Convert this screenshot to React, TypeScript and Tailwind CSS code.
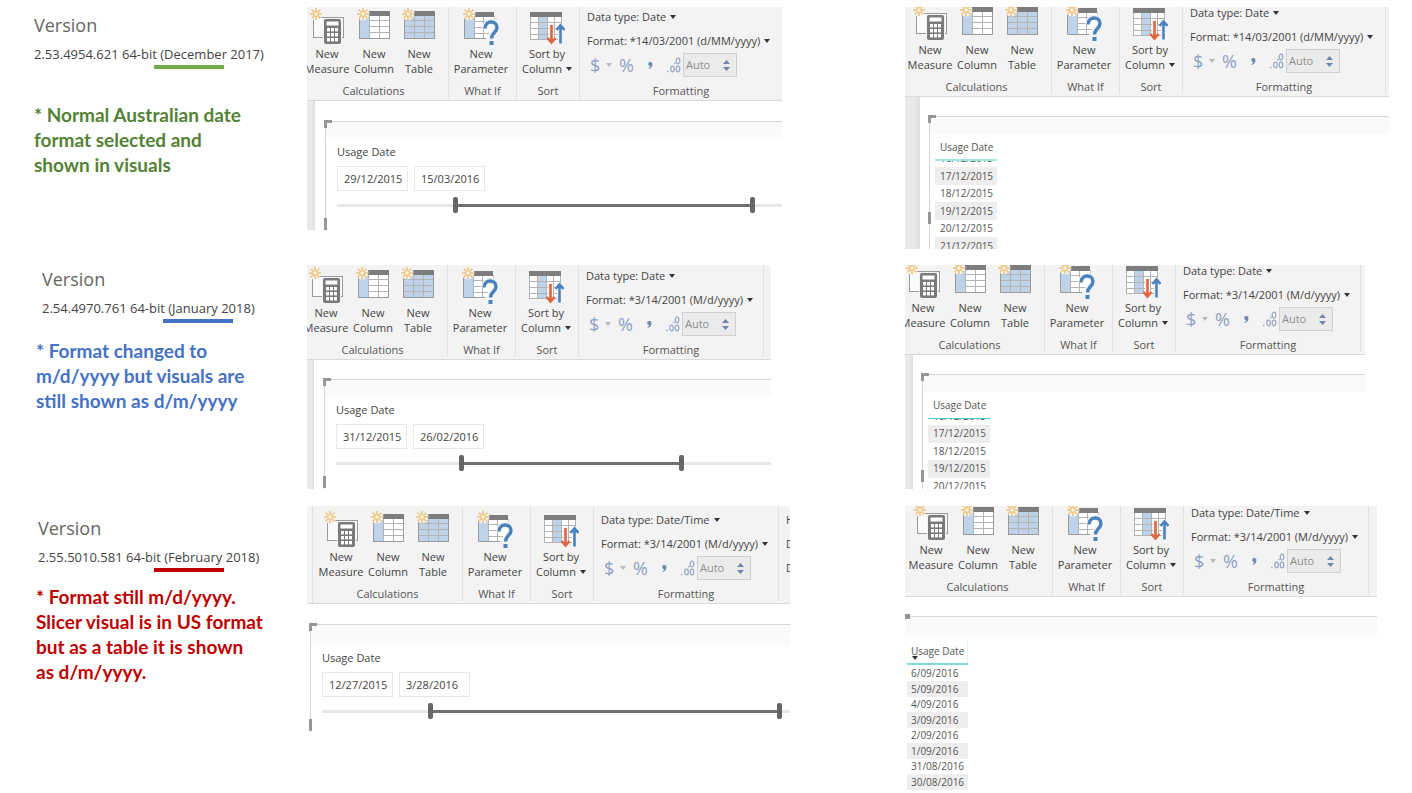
import { useState } from "react";
import type { ReactNode } from "react";
import clsx from "clsx";

interface SlicerData {
  from: string;
  to: string;
  low: number;
  high: number;
}

/* ---------- Icons ---------- */

function Star({ x, y = 6 }: { x: number; y?: number }) {
  return (
    <g transform={`translate(${x} ${y})`}>
      <circle r="6.4" fill="#f3f3f3" />
      <path
        d="M0-6V-3M0 3V6M-6 0H-3M3 0H6M-4.3-4.3L-2.2-2.2M2.2 2.2L4.3 4.3M-4.3 4.3L-2.2 2.2M2.2-2.2L4.3-4.3"
        stroke="#eec37c"
        strokeWidth="1.6"
      />
      <circle r="2.4" fill="#fdf6e8" stroke="#eec37c" strokeWidth="1.2" />
    </g>
  );
}

function MeasureIcon() {
  return (
    <svg width="36" height="38" viewBox="0 0 36 38" fill="none" aria-hidden="true">
      <rect x="4.5" y="9.5" width="30" height="20" fill="#fafafa" stroke="#9a9a9a" />
      <rect x="14" y="10" width="19" height="27" fill="#f3f3f3" />
      <rect x="15" y="11" width="17" height="25" rx="2" fill="#7a7a7a" />
      <rect x="17.5" y="13.5" width="12" height="4" fill="#fff" />
      {[20, 25, 30].map((y) =>
        [18, 22, 26].map((x) => <rect key={`${x}-${y}`} x={x} y={y} width="3" height="3.4" fill="#fff" />)
      )}
      <Star x={7} />
    </svg>
  );
}

function GridIcon({ full = false }: { full?: boolean }) {
  return (
    <svg width="36" height="38" viewBox="0 0 36 38" fill="none" aria-hidden="true">
      <rect x="3.5" y="3.5" width="30" height="27" fill="#fff" stroke="#9a9a9a" />
      <rect x="4" y="4" width={full ? 29 : 9} height="26" fill="#bfd3e8" />
      <path
        d={full ? "M4 12.5H33M4 18.5H33M4 24.5H33M13.5 8V30M23.5 8V30" : "M13 12.5H33M13 18.5H33M13 24.5H33M13.5 8V30M23.5 8V30"}
        stroke="#b3b3b3"
      />
      <rect x="3" y="3" width="31" height="5" fill="#7d7d7d" />
      <Star x={7} />
    </svg>
  );
}

function ParameterIcon() {
  return (
    <svg width="36" height="38" viewBox="0 0 36 38" fill="none" aria-hidden="true">
      <path d="M1.5 4V30.5H23M31 8V12" stroke="#9a9a9a" />
      <rect x="11" y="8" width="20" height="22" fill="#fff" />
      <rect x="2" y="8" width="9" height="22" fill="#bfd3e8" />
      <path d="M11 13.5H30M11 19.5H24M11 25.5H26M11.5 8V30M20.5 8V30" stroke="#b3b3b3" />
      <rect x="1" y="4" width="30" height="5" fill="#7d7d7d" />
      <path d="M22 20.5C22 11.5 34 12 34 19.5C34 24.5 28.5 24 28.5 30.5" stroke="#f3f3f3" strokeWidth="6" />
      <path d="M22 20.5C22 12 34 12 34 19.5C34 24.5 28.5 24.5 28.5 30.5" stroke="#4a82bd" strokeWidth="3.4" />
      <rect x="26.5" y="33" width="4" height="4" fill="#4a82bd" />
      <Star x={6} />
    </svg>
  );
}

function SortIcon() {
  return (
    <svg width="36" height="38" viewBox="0 0 36 38" fill="none" aria-hidden="true">
      <rect x="1.5" y="5.5" width="31" height="26" fill="#fff" stroke="#b3b3b3" />
      <rect x="10" y="9" width="8" height="22" fill="#bfd3e8" />
      <path d="M2 14.5H32M2 20.5H32M2 26.5H32M9.5 9V31M18.5 9V31M25.5 9V31" stroke="#b3b3b3" />
      <rect x="1" y="4" width="32" height="5" fill="#7d7d7d" />
      <path d="M22.5 16V36M31.5 16V36" stroke="#f3f3f3" strokeWidth="5" />
      <path d="M22.5 17V34M18.5 30L22.5 34.5L26.5 30" stroke="#dd6542" strokeWidth="2.6" />
      <path d="M31.5 35.5V18M27.5 22L31.5 17.5L35.5 22" stroke="#4a82bd" strokeWidth="2.6" />
    </svg>
  );
}

function Caret({ className = "text-[#333333]" }: { className?: string }) {
  return (
    <svg width="6" height="4" viewBox="0 0 6 4" className={clsx("shrink-0", className)} aria-hidden="true">
      <path d="M0 0H6L3 4Z" fill="currentColor" />
    </svg>
  );
}

function DecimalsIcon() {
  return (
    <svg width="15" height="16" viewBox="0 0 15 16" fill="none" stroke="#9dabc8" strokeWidth="1.3" aria-hidden="true">
      <ellipse cx="12" cy="4" rx="1.8" ry="2.8" />
      <ellipse cx="6.5" cy="12" rx="1.8" ry="2.8" />
      <ellipse cx="12" cy="12" rx="1.8" ry="2.8" />
      <path d="M8 6.5H9.5M1 14.5H2.5" />
    </svg>
  );
}

/* ---------- Ribbon ---------- */

function RibbonGroup({ label, className, children }: { label: string; className: string; children: ReactNode }) {
  return (
    <div className={clsx("flex h-[95px] shrink-0 flex-col border-r border-[#e1e1e1]", className)}>
      <div className="h-20">{children}</div>
      <div className="text-center leading-[15px] text-[#555555]">{label}</div>
    </div>
  );
}

function RibbonButton({ icon, lines, caret, className }: { icon: ReactNode; lines: [string, string]; caret?: boolean; className: string }) {
  return (
    <button type="button" className={clsx("flex shrink-0 flex-col items-center pt-[5px] leading-[15px] whitespace-nowrap", className)}>
      {icon}
      <span>{lines[0]}</span>
      <span className="flex items-center gap-1">
        {lines[1]}
        {caret && <Caret />}
      </span>
    </button>
  );
}

interface RibbonProps {
  dataType: string;
  format: string;
  /** margins that scroll the ribbon inside its cropped frame */
  shift: string;
  wide?: boolean;
  extra?: string[];
}

function Ribbon({ dataType, format, shift, wide, extra }: RibbonProps) {
  return (
    <div className="overflow-hidden border-b border-[#d9d9d9] bg-[#f3f3f3] text-[11px] text-[#444444]">
      <div className={clsx("flex h-[97px] border-l border-[#e1e1e1]", shift)}>
        <RibbonGroup label="Calculations" className="w-[150px]">
          <div className="flex pl-[3px]">
            <RibbonButton icon={<MeasureIcon />} lines={["New", "Measure"]} className="w-[50px]" />
            <RibbonButton icon={<GridIcon />} lines={["New", "Column"]} className="w-11" />
            <RibbonButton icon={<GridIcon full />} lines={["New", "Table"]} className="w-[46px]" />
          </div>
        </RibbonGroup>
        <RibbonGroup label="What If" className="w-[68px]">
          <RibbonButton icon={<ParameterIcon />} lines={["New", "Parameter"]} className="w-16" />
        </RibbonGroup>
        <RibbonGroup label="Sort" className="w-[63px]">
          <RibbonButton icon={<SortIcon />} lines={["Sort by", "Column"]} caret className="w-[60px]" />
        </RibbonGroup>
        <RibbonGroup label="Formatting" className={wide ? "w-[203px]" : "w-[185px]"}>
          <div className="flex flex-col pt-0.5 pl-[7px] whitespace-nowrap">
            <button type="button" className="flex h-6 items-center gap-1">
              Data type: {dataType} <Caret />
            </button>
            <button type="button" className="flex h-6 items-center gap-1">
              Format: {format} <Caret />
            </button>
            <div className="flex h-6 items-center text-[#8fa1c4]">
              <button type="button" aria-label="Currency" className="flex w-8 items-center gap-1.5 pl-[3px] text-[18px] leading-6 font-medium">
                $ <Caret className="text-[#b9b9b9]" />
              </button>
              <button type="button" aria-label="Percentage" className="w-[29px] text-left text-[18px] leading-6 font-medium">
                %
              </button>
              <button type="button" aria-label="Thousands separator" className="w-[18px]">
                <svg width="5" height="7" viewBox="0 0 5 7" aria-hidden="true">
                  <path d="M2.5 0A2 2 0 0 1 4.5 2C4.5 4.5 3 6.5 1 7L.5 6.2C1.5 5.7 2 5 2 4A2 2 0 0 1 2.5 0Z" fill="#7389b5" />
                </svg>
              </button>
              <DecimalsIcon />
              <div className="ml-0.5 flex h-6 w-[54px] items-center justify-between border border-[#cfcfcf] bg-[#ebebeb] pr-1.5 pl-0.5">
                <input aria-label="Decimal places" defaultValue="Auto" className="w-8 bg-transparent text-[#8d8d8d] outline-none" />
                <svg width="7" height="11" viewBox="0 0 7 11" fill="#6f86ad" aria-hidden="true">
                  <path d="M0 4L3.5 0L7 4ZM0 7L3.5 11L7 7Z" />
                </svg>
              </div>
            </div>
          </div>
        </RibbonGroup>
        {extra && (
          <div className="flex shrink-0 flex-col pt-0.5 pl-[7px]">
            {extra.map((text, i) => (
              <span key={i} className="h-6 leading-6">
                {text}
              </span>
            ))}
          </div>
        )}
      </div>
    </div>
  );
}

/* ---------- Report visuals ---------- */

const thumb =
  "pointer-events-none absolute inset-0 h-4 w-full appearance-none bg-transparent [&::-webkit-slider-thumb]:pointer-events-auto [&::-webkit-slider-thumb]:h-4 [&::-webkit-slider-thumb]:w-[5px] [&::-webkit-slider-thumb]:appearance-none [&::-webkit-slider-thumb]:rounded-xs [&::-webkit-slider-thumb]:bg-[#666666]";

function Slicer({ from, to, low, high }: SlicerData) {
  const [range, setRange] = useState([low, high]);

  return (
    <div>
      <h3 className="text-[11px] leading-4 text-[#444444]">Usage Date</h3>
      <div className="mt-1.5 flex gap-1.5">
        {[from, to].map((date, i) => (
          <input
            key={date}
            aria-label={i === 0 ? "Start date" : "End date"}
            defaultValue={date}
            className="h-[25px] w-[71px] border border-[#e8e8e8] bg-white pl-1.5 text-[11px] text-[#444444] outline-none"
          />
        ))}
      </div>
      <div className="relative mt-1.5 h-4">
        <div className="absolute inset-x-0 top-[7px] h-[3px] bg-[#e8e8e8]" />
        <div
          className="absolute top-[7px] h-[3px] bg-[#707070]"
          style={{ left: `${range[0] / 10}%`, right: `${100 - range[1] / 10}%` }}
        />
        {range.map((value, i) => (
          <input
            key={i}
            type="range"
            min={0}
            max={1000}
            value={value}
            aria-label={i === 0 ? "Range start" : "Range end"}
            onChange={(e) => setRange(range.map((v, j) => (j === i ? Number(e.target.value) : v)))}
            className={thumb}
          />
        ))}
      </div>
    </div>
  );
}

function ScrolledTable({ hidden, dates, line }: { hidden: string; dates: string[]; line: string }) {
  return (
    <table className="w-[62px] text-[10px] text-[#555555]">
      <thead>
        <tr className={clsx("border-b", line)}>
          <th className="h-[22px] p-0 pb-1 pl-[5px] text-left leading-4 font-normal whitespace-nowrap">Usage Date</th>
        </tr>
      </thead>
      <tbody>
        <tr>
          <td className="p-0">
            <div className="flex h-[6px] items-end overflow-hidden pl-[5px] leading-[17px]">{hidden}</div>
          </td>
        </tr>
        {dates.map((date, i) => (
          <tr key={date} className={i % 2 === 0 ? "h-[18px] bg-[#eeeeee]" : "h-[17px]"}>
            <td className="p-0 pl-[5px] leading-[17px]">{date}</td>
          </tr>
        ))}
      </tbody>
    </table>
  );
}

function SortedTable({ dates }: { dates: string[] }) {
  return (
    <table className="w-[61px] text-[10px] text-[#555555]">
      <thead>
        <tr className="border-b-2 border-[#7fdcd4]">
          <th className="relative h-[25px] border-r border-[#e3f5f4] p-0 pl-1 text-left leading-4 font-normal whitespace-nowrap">
            Usage Date
            <Caret className="absolute bottom-[3px] left-[5px] text-[#333333]" />
          </th>
        </tr>
      </thead>
      <tbody>
        <tr className="h-0.5" />
        {dates.map((date, i) => (
          <tr key={date} className={i % 2 === 1 ? "h-4 bg-[#eeeeee]" : "h-[15px]"}>
            <td className="p-0 pl-1 leading-[15px]">{date}</td>
          </tr>
        ))}
      </tbody>
    </table>
  );
}

interface CanvasProps {
  height: string;
  /** width of the grey strip on the left */
  gutter?: string;
  frame: string;
  band?: string;
  body: string;
  handle?: string;
  children: ReactNode;
}

function Canvas({ height, gutter, frame, band = "h-[17px]", body, handle, children }: CanvasProps) {
  return (
    <div className={clsx("flex overflow-hidden bg-white", height)}>
      {gutter && <div className={clsx("shrink-0 bg-linear-to-r from-[#e9e9e9] from-60% to-[#dedede]", gutter)} />}
      <div className={clsx("relative grow border-t border-[#d6d6d6]", frame)}>
        {handle ? (
          <>
            <span className="absolute -top-0.5 -left-0.5 size-2 border-t-[3px] border-l-[3px] border-[#969696]" />
            <span className={clsx("absolute -left-0.5 h-3 w-[3px] bg-[#969696]", handle)} />
          </>
        ) : (
          <span className="absolute -top-[3px] left-0 h-[5px] w-[5px] bg-[#969696]" />
        )}
        <div className={clsx("bg-[#fafafa]", band)} />
        <div className={body}>{children}</div>
      </div>
    </div>
  );
}

/* ---------- Version notes ---------- */

interface VersionProps {
  version: string;
  indent: string;
  underline: string;
  noteClass: string;
  note: string[];
}

function VersionNote({ version, indent, underline, noteClass, note }: VersionProps) {
  return (
    <div>
      <div className={indent}>
        <h2 className="text-[18px] leading-6 text-[#666666]">Version</h2>
        <div className="relative mt-[7px] w-fit">
          <p className="text-[13px] leading-5 whitespace-nowrap text-[#444444]">{version}</p>
          <span className={clsx("absolute top-[21px] h-1 w-[70px]", underline)} />
        </div>
      </div>
      <p className={clsx("font-['Lato','Liberation_Sans',sans-serif] text-[19px] leading-[25px] font-bold whitespace-nowrap", noteClass)}>
        {note.map((line) => (
          <span key={line} className="block">
            {line}
          </span>
        ))}
      </p>
    </div>
  );
}

const ROW = "grid grid-cols-[minmax(0,307fr)_minmax(0,598fr)_minmax(0,507fr)]";

export default function App() {
  return (
    <main className="min-h-screen overflow-hidden bg-white pt-[7px] font-['Open_Sans','Noto_Sans',sans-serif]">
      {/* December 2017 */}
      <section className={clsx(ROW, "mb-4")}>
        <div className="pt-1.5">
          <VersionNote
            version="2.53.4954.621 64-bit (December 2017)"
            indent="pl-[34px]"
            underline="left-[120px] bg-[#70ad47]"
            noteClass="mt-[38px] pl-[34px] text-[#548235]"
            note={["* Normal Australian date", "format selected and", "shown in visuals"]}
          />
        </div>
        <div className="pr-[123px]">
          <Ribbon dataType="Date" format="*14/03/2001 (d/MM/yyyy)" shift="-mt-1 -ml-[9px]" wide />
          <Canvas height="h-[129px]" gutter="w-2" frame="mt-5 ml-[10px] border-l" body="pt-[5px] pl-[11px]" handle="top-[96px]">
            <Slicer from="29/12/2015" to="15/03/2016" low={264} high={938} />
          </Canvas>
        </div>
        <div className="pr-[23px]">
          <Ribbon dataType="Date" format="*14/03/2001 (d/MM/yyyy)" shift="-mt-2 -ml-1" wide />
          <Canvas height="h-[152px]" gutter="w-[15px]" frame="mt-[19px] ml-[9px] border-l" body="pt-1 pl-[5px]" handle="top-[95px]">
            <ScrolledTable
              hidden="16/12/2015"
              dates={["17/12/2015", "18/12/2015", "19/12/2015", "20/12/2015", "21/12/2015"]}
              line="border-b-2 border-[#a3e6df]"
            />
          </Canvas>
        </div>
      </section>

      {/* January 2018 */}
      <section className={clsx(ROW, "mb-[17px]")}>
        <div className="pt-0.5">
          <VersionNote
            version="2.54.4970.761 64-bit (January 2018)"
            indent="pl-[42px]"
            underline="left-[121px] bg-[#4472c4]"
            noteClass="mt-5 pl-9 text-[#4472c4]"
            note={["* Format changed to", "m/d/yyyy but visuals are", "still shown as d/m/yyyy"]}
          />
        </div>
        <div className="pr-[134px]">
          <Ribbon dataType="Date" format="*3/14/2001 (M/d/yyyy)" shift="-mt-[3px] -ml-[10px]" />
          <Canvas height="h-[129px]" gutter="w-[7px]" frame="mt-[19px] ml-[10px] border-l" body="pt-[5px] pl-[11px]" handle="top-[96px]">
            <Slicer from="31/12/2015" to="26/02/2016" low={286} high={798} />
          </Canvas>
        </div>
        <div className="pr-[47px]">
          <Ribbon dataType="Date" format="*3/14/2001 (M/d/yyyy)" shift="-mt-2 -ml-[11px]" />
          <Canvas height="h-[134px]" gutter="w-2" frame="mt-[19px] ml-[9px] border-l" body="pt-1 pl-[5px]" handle="top-[95px]">
            <ScrolledTable
              hidden="16/12/2015"
              dates={["17/12/2015", "18/12/2015", "19/12/2015", "20/12/2015"]}
              line="border-[#45cfc6]"
            />
          </Canvas>
        </div>
      </section>

      {/* February 2018 */}
      <section className={ROW}>
        <div className="pt-[10px]">
          <VersionNote
            version="2.55.5010.581 64-bit (February 2018)"
            indent="pl-[38px]"
            underline="left-[116px] bg-[#c00000]"
            noteClass="mt-[17px] pl-9 text-[#c00000]"
            note={["* Format still m/d/yyyy.", "Slicer visual is in US format", "but as a table it is shown", "as d/m/yyyy."]}
          />
        </div>
        <div className="pr-[115px]">
          <Ribbon dataType="Date/Time" format="*3/14/2001 (M/d/yyyy)" shift="ml-[5px]" extra={["H", "D", "D"]} />
          <Canvas height="h-[127px]" frame="mt-5 ml-[3px] border-l" band="h-5" body="pt-[5px] pl-[11px]" handle="top-[94px]">
            <Slicer from="12/27/2015" to="3/28/2016" low={229} high={982} />
          </Canvas>
        </div>
        <div className="pr-[35px]">
          <Ribbon dataType="Date/Time" format="*3/14/2001 (M/d/yyyy)" shift="-mt-[7px] -ml-[3px]" />
          <Canvas height="h-[195px]" frame="mt-[19px]" band="h-5" body="pt-0.5 pl-0.5">
            <SortedTable
              dates={[
                "6/09/2016",
                "5/09/2016",
                "4/09/2016",
                "3/09/2016",
                "2/09/2016",
                "1/09/2016",
                "31/08/2016",
                "30/08/2016",
              ]}
            />
          </Canvas>
        </div>
      </section>
    </main>
  );
}
